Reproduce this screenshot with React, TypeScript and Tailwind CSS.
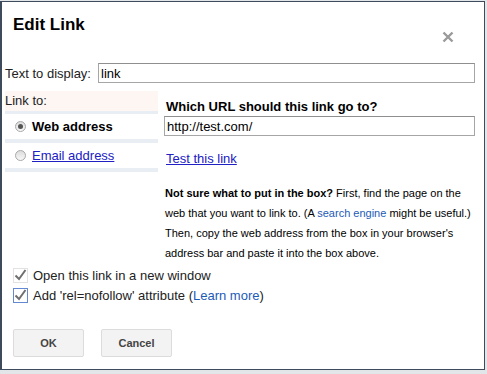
import { type FC } from "react";

const font = { fontFamily: '"Liberation Sans", Arial, sans-serif' };

const Radio: FC<{ checked?: boolean }> = ({ checked }) => (
  <span className="flex h-[11px] w-[11px] shrink-0 items-center justify-center rounded-full border border-[#a8a8a8] bg-gradient-to-b from-[#dcdcdc] to-[#f8f8f8]">
    {checked && <span className="h-[5px] w-[5px] rounded-full bg-[#555]" />}
  </span>
);

const Check: FC<{ focused?: boolean }> = ({ focused }) => (
  <span
    className={
      "relative h-[15px] w-[15px] shrink-0 border bg-white " +
      (focused ? "border-[#6489d2]" : "border-[#e2e2e2]")
    }
  >
    <svg className="absolute -left-px -top-px" width="15" height="15" viewBox="0 0 15 15">
      <polyline points="2.5,7.5 6,11 12.5,2" fill="none" stroke="#6f6f6f" strokeWidth="2" />
    </svg>
  </span>
);

export default function App() {
  return (
    <div className="h-[374px] w-[487px] bg-[#e3e6e9] pt-px" style={font}>
      <div className="h-[369px] w-[485px] border border-l-2 border-[#3d4b5c] bg-white text-[13px] leading-[15px] text-[#222]">
        {/* Header */}
        <div className="flex items-start justify-between pl-[11px] pr-[30px] pt-[13px]">
          <h1 className="text-[17px] font-bold leading-[20px] text-black">Edit Link</h1>
          <svg className="mt-[16px]" width="12" height="12" viewBox="0 0 12 12">
            <path d="M1.5 1.5 L10.5 10.5 M10.5 1.5 L1.5 10.5" stroke="#9a9a9a" strokeWidth="2.4" />
          </svg>
        </div>

        {/* Text to display */}
        <div className="mt-[20px] flex items-center gap-[7px] pl-[3px]">
          <span>Text to display:</span>
          <div className="flex h-[20px] w-[377px] items-center border border-[#a6a6a6] border-t-[#8f8f8f] px-[2px] text-black">
            link
          </div>
        </div>

        {/* Link to */}
        <div className="mt-[8px] flex gap-[6px] pl-[3px]">
          <div className="w-[153px]">
            <div className="h-[20px] bg-[#fdf6f3] leading-[20px]">Link to:</div>
            <div className="flex flex-col gap-[4px] bg-[#e9eef5] pb-[4px] pt-[3px]">
              <div className="flex h-[25px] items-center gap-[6px] bg-white pl-[10px]">
                <Radio checked />
                <span className="font-bold text-black">Web address</span>
              </div>
              <div className="flex h-[25px] items-center gap-[6px] bg-white pl-[10px]">
                <Radio />
                <span className="text-[#2020c4] underline">Email address</span>
              </div>
            </div>
          </div>

          <div className="flex flex-col">
            <div className="mt-[8px] pl-[2px] font-bold text-black">Which URL should this link go to?</div>
            <div className="mt-[2px] flex h-[20px] w-[311px] items-center border border-[#a6a6a6] border-t-[#8f8f8f] px-[2px] text-black">
              http://test.com/
            </div>
            <span className="mt-[15px] pl-[2px] text-[#2020c4] underline">Test this link</span>
            <p className="mt-[17px] w-[314px] pl-px text-[11px] leading-[20px] text-black">
              <b>Not sure what to put in the box?</b> First, find the page on the web that you want to
              link to. (A <span className="text-[#1c5bb8]">search engine</span> might be useful.)
              Then, copy the web address from the box in your browser's address bar and paste it into
              the box above.
            </p>
          </div>
        </div>

        {/* Options */}
        <div className="mt-[2px] flex flex-col pl-[11px]">
          <label className="flex h-[20px] items-center gap-[5px]">
            <Check />
            <span>Open this link in a new window</span>
          </label>
          <label className="flex h-[20px] items-center gap-[5px]">
            <Check focused />
            <span>
              Add 'rel=nofollow' attribute (<span className="text-[#1c5bb8]">Learn more</span>)
            </span>
          </label>
        </div>

        {/* Buttons */}
        <div className="mt-[24px] flex gap-[17px] pl-[11px]">
          <button className="h-[28px] w-[71px] rounded-[2px] border border-[#dcdcdc] bg-[#f3f3f3] text-[11px] font-bold text-[#444]">
            OK
          </button>
          <button className="h-[28px] w-[71px] rounded-[2px] border border-[#dcdcdc] bg-[#f3f3f3] text-[11px] font-bold text-[#444]">
            Cancel
          </button>
        </div>
      </div>
    </div>
  );
}
